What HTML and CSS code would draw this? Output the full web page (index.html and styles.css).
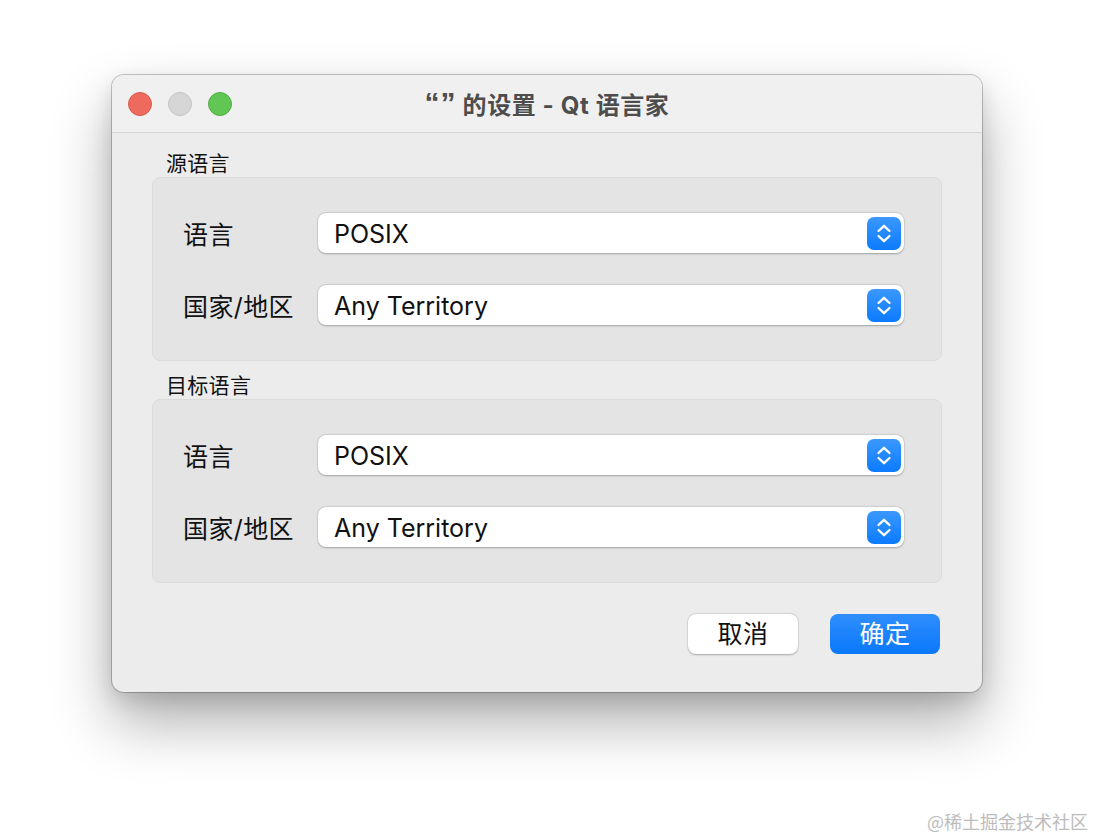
FILE: index.html
```html
<!DOCTYPE html>
<html lang="zh-CN">
<head>
<meta charset="utf-8">
<title>Qt 语言家 设置</title>
<link rel="stylesheet" href="styles.css">
</head>
<body>
<div class="window">
  <div class="titlebar">
    <div class="lights">
      <span class="light red"></span>
      <span class="light grey"></span>
      <span class="light green"></span>
    </div>
    <div class="title"><span class="quotes">“”</span>的设置 - Qt 语言家</div>
  </div>
  <div class="content">
    <div class="group-label">源语言</div>
    <div class="group">
      <div class="label">语言</div>
      <div class="combo"><span class="combo-text">POSIX</span>
        <span class="stepper"><svg width="34" height="33" viewBox="0 0 34 33"><path d="M11.5 14 L17 8.8 L22.5 14 M11.5 19 L17 24.2 L22.5 19" fill="none" stroke="#fff" stroke-width="2.3" stroke-linecap="round" stroke-linejoin="round"/></svg></span>
      </div>
      <div class="label">国家/地区</div>
      <div class="combo"><span class="combo-text">Any Territory</span>
        <span class="stepper"><svg width="34" height="33" viewBox="0 0 34 33"><path d="M11.5 14 L17 8.8 L22.5 14 M11.5 19 L17 24.2 L22.5 19" fill="none" stroke="#fff" stroke-width="2.3" stroke-linecap="round" stroke-linejoin="round"/></svg></span>
      </div>
    </div>
    <div class="group-label second">目标语言</div>
    <div class="group">
      <div class="label">语言</div>
      <div class="combo"><span class="combo-text">POSIX</span>
        <span class="stepper"><svg width="34" height="33" viewBox="0 0 34 33"><path d="M11.5 14 L17 8.8 L22.5 14 M11.5 19 L17 24.2 L22.5 19" fill="none" stroke="#fff" stroke-width="2.3" stroke-linecap="round" stroke-linejoin="round"/></svg></span>
      </div>
      <div class="label">国家/地区</div>
      <div class="combo"><span class="combo-text">Any Territory</span>
        <span class="stepper"><svg width="34" height="33" viewBox="0 0 34 33"><path d="M11.5 14 L17 8.8 L22.5 14 M11.5 19 L17 24.2 L22.5 19" fill="none" stroke="#fff" stroke-width="2.3" stroke-linecap="round" stroke-linejoin="round"/></svg></span>
      </div>
    </div>
    <div class="buttons">
      <button class="btn cancel">取消</button>
      <button class="btn ok">确定</button>
    </div>
  </div>
</div>
<div class="watermark">@稀土掘金技术社区</div>
</body>
</html>
```
FILE: styles.css
```css
html, body {
  margin: 0;
  padding: 0;
}
body {
  width: 1094px;
  height: 840px;
  background: #ffffff;
  position: relative;
  overflow: hidden;
  font-family: Inter, "Noto Sans CJK SC", sans-serif;
  color: #111;
  padding-top: 75px;
  padding-left: 112px;
  box-sizing: border-box;
}
.window {
  width: 870px;
  height: 617px;
  border-radius: 12px;
  background: #ececec;
  overflow: hidden;
  box-shadow: 0 0 0 1px rgba(0,0,0,0.22), 0 30px 60px rgba(0,0,0,0.32), 0 8px 20px rgba(0,0,0,0.12);
  display: flex;
  flex-direction: column;
}
.titlebar {
  height: 57px;
  flex: none;
  background: #f1f0f0;
  border-bottom: 1px solid #d6d5d5;
  display: flex;
  align-items: center;
  position: relative;
}
.lights {
  display: flex;
  gap: 16px;
  padding-left: 16px;
}
.light {
  width: 24px;
  height: 24px;
  border-radius: 50%;
  box-sizing: border-box;
}
.red { background: #ee6a5f; border: 1px solid #d65a4f; }
.grey { background: #d6d6d6; border: 1px solid #c3c3c3; }
.green { background: #62c655; border: 1px solid #52ad46; }
.title {
  position: absolute;
  left: 0;
  right: 0;
  top: 0;
  bottom: 0;
  display: flex;
  align-items: center;
  justify-content: center;
  font-size: 24px;
  font-weight: 700;
  color: #4d4d4d;
  letter-spacing: 0.6px;
  padding-bottom: 1px;
}
.quotes {
  letter-spacing: 1px;
  margin-right: 6px;
  font-family: "Liberation Sans", sans-serif;
  font-size: 30px;
}
.content {
  flex: 1;
  padding: 17px 40px 0 40px;
  display: flex;
  flex-direction: column;
}
.group-label {
  font-size: 21px;
  line-height: 27px;
  height: 27px;
  padding-left: 14px;
  color: #111;
  letter-spacing: 0.3px;
}
.group-label.second {
  margin-top: 11px;
}
.group {
  height: 184px;
  box-sizing: border-box;
  background: #e4e4e4;
  border: 1px solid #dbdbdb;
  border-radius: 8px;
  padding: 35px 37px 35px 30px;
  display: grid;
  grid-template-columns: 135px 586px;
  grid-auto-rows: 40px;
  row-gap: 32px;
  align-items: center;
}
.label {
  font-size: 25px;
  color: #111;
  line-height: 40px;
  padding-top: 3px;
  letter-spacing: 0.4px;
}
.combo {
  height: 40px;
  background: #fff;
  border-radius: 8px;
  box-shadow: 0 0.5px 2px rgba(0,0,0,0.28), 0 0 0 0.5px rgba(0,0,0,0.06);
  display: flex;
  align-items: center;
  justify-content: space-between;
  padding: 0 3px 0 16px;
}
.combo-text {
  font-size: 25px;
  color: #111;
  padding-top: 1px;
}
.stepper {
  width: 34px;
  height: 33px;
  border-radius: 7px;
  background: linear-gradient(#3a98fd, #0c7bff);
  display: flex;
}
.buttons {
  margin-top: 31px;
  display: flex;
  justify-content: flex-end;
  gap: 32px;
  padding-right: 2px;
}
.btn {
  width: 110px;
  height: 40px;
  border: none;
  border-radius: 8px;
  font-family: Inter, "Noto Sans CJK SC", sans-serif;
  font-size: 25px;
  padding: 0 0 4px 0;
  letter-spacing: 0.5px;
}
.cancel {
  background: #fff;
  color: #111;
  box-shadow: 0 0.5px 2px rgba(0,0,0,0.28), 0 0 0 0.5px rgba(0,0,0,0.06);
}
.ok {
  background: linear-gradient(#2f8efd, #0a78fb);
  color: #fff;
}
.watermark {
  position: absolute;
  right: 6px;
  bottom: 6px;
  font-size: 18px;
  color: #bcbcbc;
  font-family: "Noto Sans CJK SC", sans-serif;
}
```
